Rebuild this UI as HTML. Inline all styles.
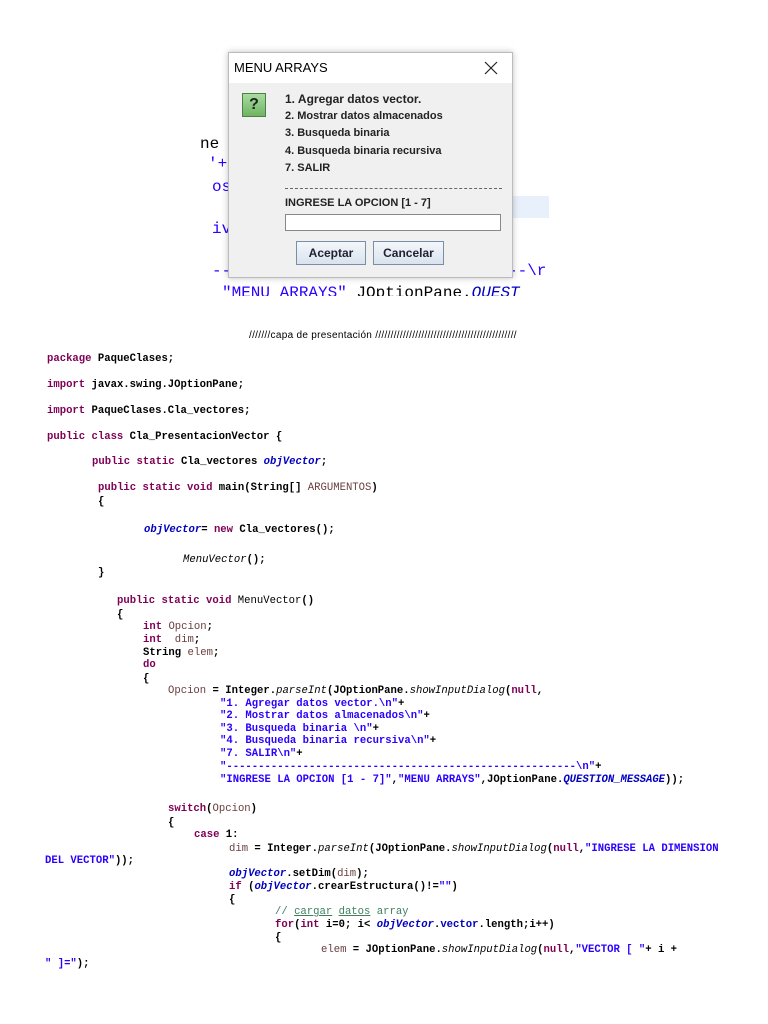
<!DOCTYPE html>
<html><head><meta charset="utf-8"><style>
body{margin:0;width:768px;height:1024px;background:#fff;position:relative;overflow:hidden;font-family:"Liberation Mono",monospace}
.l{position:absolute;font-size:10.6px;line-height:14px;white-space:pre;font-weight:bold;color:#000}
.k{color:#7f0055}.s{color:#2a00ff}.f{color:#0000c0;font-style:italic}.v{color:#6a3e3e;font-weight:normal}.c{color:#3f7f5f;font-weight:normal}.i{font-style:italic;font-weight:normal}
.bg{position:absolute;font-size:16px;line-height:18px;white-space:pre;color:#000}
.dlg{position:absolute;left:228px;top:52px;width:283px;height:224px;background:#f0f0f0;border:1px solid #bbb;box-shadow:0 0 6px rgba(0,0,0,.25);font-family:"Liberation Sans",sans-serif}
.tt{height:30px;background:#fff;font-size:13px;line-height:30px;padding-left:5px;color:#000}
.m{position:absolute;left:56px;font-size:11px;font-weight:bold;color:#222}
.btn{position:absolute;top:188px;height:22px;border:1px solid #7a8ea8;background:linear-gradient(#f4f7fb,#d9e3ee);font-size:12px;font-weight:bold;text-align:center;line-height:22px;color:#223}
</style></head><body>
<div class="bg" style="left:200px;top:135px;color:#000">ne</div>
<div class="bg" style="left:208px;top:155px;color:#2a00ff">'+</div>
<div class="bg" style="left:212px;top:178px;color:#2a00ff">os</div>
<div style="position:absolute;left:500px;top:196px;width:49px;height:22px;background:#e8f0fc"></div>
<div class="bg" style="left:212px;top:220px;color:#2a00ff">iv</div>
<div class="bg" style="left:212px;top:262px;color:#2a00ff">--</div>
<div class="bg" style="left:508px;top:262px;color:#2a00ff;width:42px;overflow:hidden">--\r</div>
<div class="bg" style="left:222px;top:284px;color:#2a00ff;width:328px;overflow:hidden;height:12px">"MENU ARRAYS" <span style="color:#000">JOptionPane.</span><i style="color:#0000c0">QUEST</i></div>
<div class="dlg">
<div class="tt">MENU ARRAYS<svg style="position:absolute;right:14px;top:8px" width="14" height="14" viewBox="0 0 14 14"><path d="M1 1L13 13M13 1L1 13" stroke="#222" stroke-width="1.2"/></svg></div>
<div style="position:absolute;left:13px;top:40px;width:22px;height:22px;background:linear-gradient(#a8dca0,#6fb463);border:1px solid #4d7f46;font-weight:bold;font-size:16px;text-align:center;line-height:22px;color:#222">?</div>
<div class="m" style="top:39px;font-size:12px">1. Agregar datos vector.</div>
<div class="m" style="top:57px">2. Mostrar datos almacenados</div>
<div class="m" style="top:74px">3. Busqueda binaria</div>
<div class="m" style="top:92px">4. Busqueda binaria recursiva</div>
<div class="m" style="top:109px">7. SALIR</div>
<div style="position:absolute;left:56px;top:135px;width:217px;border-top:1px dashed #666"></div>
<div class="m" style="top:144px">INGRESE LA OPCION [1 - 7]</div>
<div style="position:absolute;left:56px;top:161px;width:214px;height:15px;background:#fff;border:1px solid #888"></div>
<div class="btn" style="left:67px;width:68px">Aceptar</div>
<div class="btn" style="left:144px;width:69px">Cancelar</div>
</div>
<div style="position:absolute;left:249px;top:330px;font-family:'Liberation Sans',sans-serif;font-size:10px;white-space:pre;letter-spacing:0.3px">///////capa de presentación //////////////////////////////////////////////</div>
<div class="l" style="left:47px;top:352px"><span class="k">package</span> PaqueClases;</div>
<div class="l" style="left:47px;top:378px"><span class="k">import</span> javax.swing.JOptionPane;</div>
<div class="l" style="left:47px;top:404px"><span class="k">import</span> PaqueClases.Cla_vectores;</div>
<div class="l" style="left:47px;top:430px"><span class="k">public class</span> Cla_PresentacionVector {</div>
<div class="l" style="left:92px;top:455px"><span class="k">public static</span> Cla_vectores <span class="f">objVector</span>;</div>
<div class="l" style="left:98px;top:481px"><span class="k">public static void</span> main(String[] <span class="v">ARGUMENTOS</span>)</div>
<div class="l" style="left:98px;top:495px">{</div>
<div class="l" style="left:144px;top:523px"><span class="f">objVector</span>= <span class="k">new</span> Cla_vectores();</div>
<div class="l" style="left:183px;top:553px"><span class="i">MenuVector</span>();</div>
<div class="l" style="left:98px;top:566px">}</div>
<div class="l" style="left:117px;top:594px"><span class="k">public static void</span> <span style="font-weight:normal">MenuVector</span>()</div>
<div class="l" style="left:117px;top:608px">{</div>
<div class="l" style="left:143px;top:620px"><span class="k">int</span> <span class="v">Opcion</span>;</div>
<div class="l" style="left:143px;top:633px"><span class="k">int</span>  <span class="v">dim</span>;</div>
<div class="l" style="left:143px;top:646px">String <span class="v">elem</span>;</div>
<div class="l" style="left:143px;top:658px"><span class="k">do</span></div>
<div class="l" style="left:143px;top:672px">{</div>
<div class="l" style="left:168px;top:684px"><span class="v">Opcion</span> = Integer.<span class="i">parseInt</span>(JOptionPane.<span class="i">showInputDialog</span>(<span class="k">null</span>,</div>
<div class="l s" style="left:220px;top:697px">"1. Agregar datos vector.\n"<span style="color:#000">+</span></div>
<div class="l s" style="left:220px;top:709px">"2. Mostrar datos almacenados\n"<span style="color:#000">+</span></div>
<div class="l s" style="left:220px;top:722px">"3. Busqueda binaria \n"<span style="color:#000">+</span></div>
<div class="l s" style="left:220px;top:734px">"4. Busqueda binaria recursiva\n"<span style="color:#000">+</span></div>
<div class="l s" style="left:220px;top:747px">"7. SALIR\n"<span style="color:#000">+</span></div>
<div class="l s" style="left:220px;top:760px">"-------------------------------------------------------\n"<span style="color:#000">+</span></div>
<div class="l s" style="left:220px;top:773px">"INGRESE LA OPCION [1 - 7]"<span style="color:#000">,</span>"MENU ARRAYS"<span style="color:#000">,JOptionPane.</span><span class="f">QUESTION_MESSAGE</span><span style="color:#000">));</span></div>
<div class="l" style="left:168px;top:802px"><span class="k">switch</span>(<span class="v">Opcion</span>)</div>
<div class="l" style="left:168px;top:816px">{</div>
<div class="l" style="left:194px;top:828px"><span class="k">case</span> 1:</div>
<div class="l" style="left:229px;top:842px"><span class="v">dim</span> = Integer.<span class="i">parseInt</span>(JOptionPane.<span class="i">showInputDialog</span>(<span class="k">null</span>,<span class="s">"INGRESE LA DIMENSION</span></div>
<div class="l" style="left:45px;top:854px"><span class="s">DEL VECTOR"</span>));</div>
<div class="l" style="left:229px;top:867px"><span class="f">objVector</span>.setDim(<span class="v">dim</span>);</div>
<div class="l" style="left:229px;top:880px"><span class="k">if</span> (<span class="f">objVector</span>.crearEstructura()!=<span class="s">""</span>)</div>
<div class="l" style="left:229px;top:893px">{</div>
<div class="l c" style="left:275px;top:905px">// <u>cargar</u> <u>datos</u> array</div>
<div class="l" style="left:275px;top:918px"><span class="k">for</span>(<span class="k">int</span> i=0; i&lt; <span class="f">objVector</span>.<span style="color:#0000c0">vector</span>.length;i++)</div>
<div class="l" style="left:275px;top:931px">{</div>
<div class="l" style="left:321px;top:943px"><span class="v">elem</span> = JOptionPane.<span class="i">showInputDialog</span>(<span class="k">null</span>,<span class="s">"VECTOR [ "</span>+ i +</div>
<div class="l" style="left:45px;top:957px"><span class="s">" ]="</span>);</div>
</body></html>
